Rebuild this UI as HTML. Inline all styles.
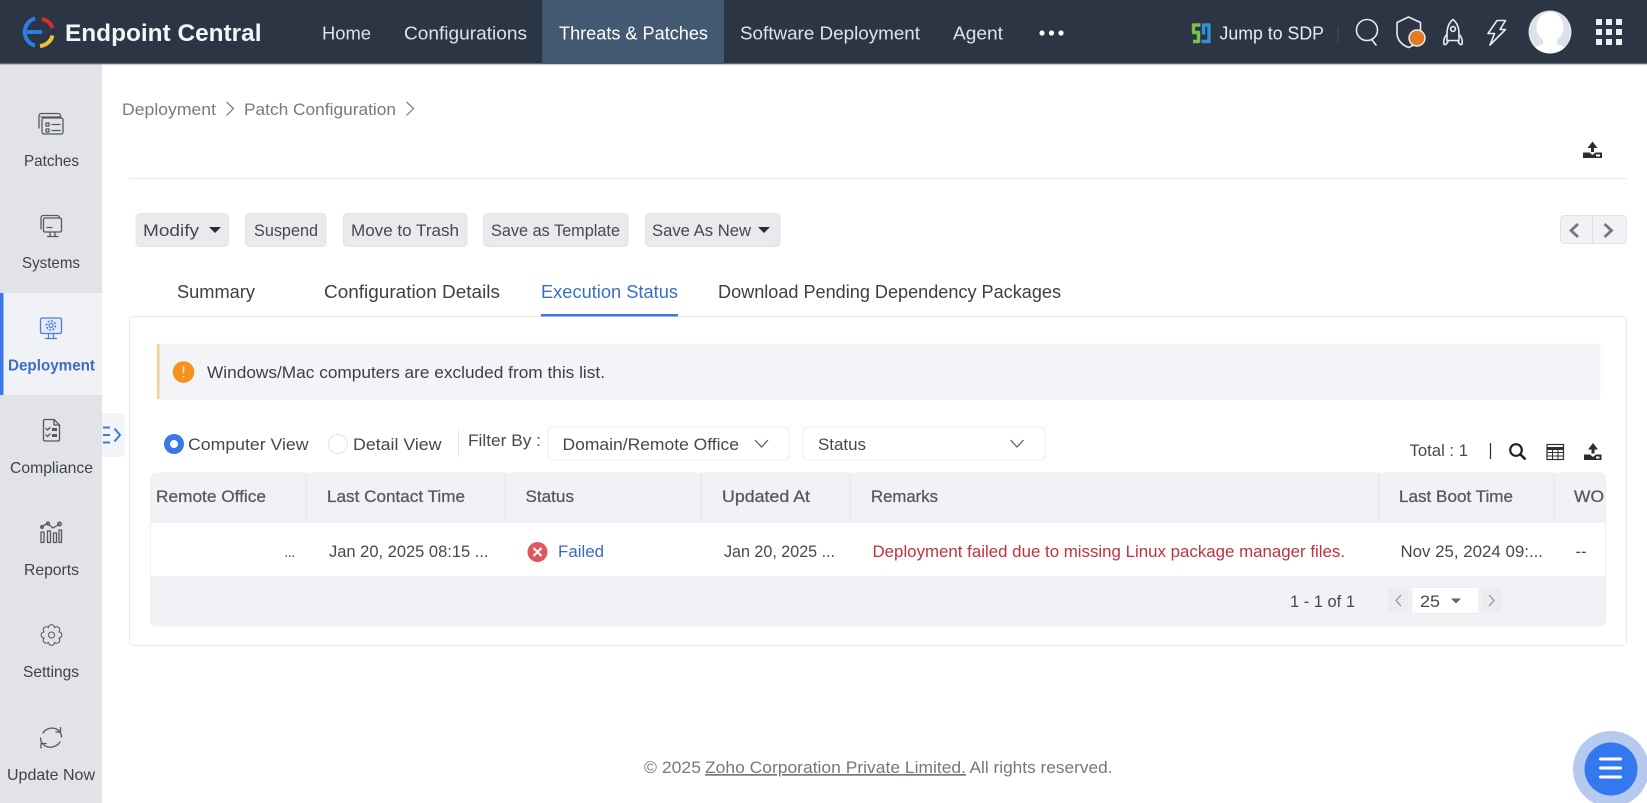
<!DOCTYPE html>
<html lang="en">
<head>
<meta charset="utf-8">
<title>Endpoint Central</title>
<style>
html,body{margin:0;padding:0;width:1647px;height:803px;overflow:hidden;background:#fff}
svg{display:block;filter:blur(.3px)}
text{font-family:"Liberation Sans",sans-serif;font-size:17px;fill:#45484d}
.n{font-size:18px;fill:#dfe3e8}
.s{font-size:16px;fill:#3f4246}
.b{font-size:16.500px;fill:#45484d}
.h{font-size:17px;fill:#54575c;stroke:#54575c;stroke-width:.25}
.i{fill:none;stroke:#55585d;stroke-width:1.3;stroke-linecap:round;stroke-linejoin:round}
.w{fill:none;stroke:#e8ebef;stroke-width:1.6;stroke-linecap:round;stroke-linejoin:round}
</style>
</head>
<body>
<svg width="1647" height="803" viewBox="0 0 1647 803" xmlns="http://www.w3.org/2000/svg">
<defs><clipPath id="av"><circle cx="1550" cy="32" r="21.500"/></clipPath></defs>
<rect width="1647" height="803" fill="#fff"/>

<!-- Header -->
<rect width="1647" height="64" fill="#2c3544"/>
<rect y="63.500" width="1647" height="1" fill="#8d96a3"/>
<rect x="542" width="182" height="64" fill="#435971"/>
<path d="M35 18.500A14 14 0 0 0 35 45.500" fill="none" stroke="#2f7de1" stroke-width="4"/>
<path d="M27 32H42" fill="none" stroke="#2f7de1" stroke-width="4"/>
<path d="M42 19A14 14 0 0 1 52.500 28" fill="none" stroke="#d92d2d" stroke-width="4"/>
<path d="M52.500 35.500A14 14 0 0 1 40 46" fill="none" stroke="#f4c430" stroke-width="4"/>
<text x="65" y="41" textLength="196.500" lengthAdjust="spacingAndGlyphs" style="font-size:24px;font-weight:700;fill:#f4f5f7">Endpoint Central</text>
<text class="n" x="322" y="39.500" textLength="49" lengthAdjust="spacingAndGlyphs">Home</text>
<text class="n" x="404" y="39.500" textLength="123" lengthAdjust="spacingAndGlyphs">Configurations</text>
<text class="n" x="559" y="39.500" textLength="149" lengthAdjust="spacingAndGlyphs" style="fill:#fff">Threats &amp; Patches</text>
<text class="n" x="740" y="39.500" textLength="180" lengthAdjust="spacingAndGlyphs">Software Deployment</text>
<text class="n" x="953" y="39.500" textLength="50" lengthAdjust="spacingAndGlyphs">Agent</text>
<circle cx="1042" cy="33" r="2.600" fill="#fff"/><circle cx="1051.500" cy="33" r="2.600" fill="#fff"/><circle cx="1061" cy="33" r="2.600" fill="#fff"/>

<!-- Jump to SDP -->
<path d="M1200.500 25H1193.500V32.500H1198.500V41.500H1193" fill="none" stroke="#7cc04b" stroke-width="3.400" stroke-linejoin="round"/>
<path d="M1201.500 41.500H1209V25H1203.500V34.500" fill="none" stroke="#2f93d6" stroke-width="3.400" stroke-linejoin="round"/>
<text x="1219.500" y="39.500" textLength="104.500" lengthAdjust="spacingAndGlyphs" style="font-size:18px;fill:#e8ebef">Jump to SDP</text>
<path d="M1338 27V43" stroke="#454e5c" stroke-width="1"/>
<circle cx="1367" cy="30" r="10.500" class="w"/>
<path d="M1372 40L1376 45" class="w"/>
<path d="M1408.500 17L1397 22.500V33C1397 40 1402 45 1408.500 47.500C1415 45 1420.500 40 1420.500 33V22.500Z" class="w"/>
<circle cx="1417" cy="38" r="8" fill="#e07b23" stroke="#eef0f3" stroke-width="1.400"/>
<path d="M1453 19.500C1448.500 23 1447 29 1447 34V40.500H1459V34C1459 29 1457.500 23 1453 19.500Z" class="w"/>
<circle cx="1453" cy="29" r="2.400" class="w"/>
<path d="M1447 34.500C1444.500 36.500 1443.500 39 1443.800 43.500C1444 45 1446 45 1447 43L1448 41.500M1459 34.500C1461.500 36.500 1462.500 39 1462.200 43.500C1462 45 1460 45 1459 43L1458 41.500" class="w"/>
<path d="M1497 20.500H1505.500L1500 29.500H1505.500L1490 45L1494.500 33.500H1488Z" class="w"/>
<circle cx="1550" cy="32" r="21.500" fill="#dce1ea"/>
<g clip-path="url(#av)" fill="#fff">
<ellipse cx="1550" cy="27" rx="13.500" ry="15"/>
<rect x="1543" y="36" width="14" height="14"/>
<ellipse cx="1550" cy="53" rx="18" ry="9.500"/>
</g>
<g fill="#eceef1">
<rect x="1596" y="19" width="6" height="6"/><rect x="1606" y="19" width="6" height="6"/><rect x="1616" y="19" width="6" height="6"/>
<rect x="1596" y="29" width="6" height="6"/><rect x="1606" y="29" width="6" height="6"/><rect x="1616" y="29" width="6" height="6"/>
<rect x="1596" y="39" width="6" height="6"/><rect x="1606" y="39" width="6" height="6"/><rect x="1616" y="39" width="6" height="6"/>
</g>

<!-- Sidebar -->
<rect y="64.500" width="102" height="739" fill="#e1e3e9"/>
<rect y="293" width="102" height="102" fill="#f1f2f6"/>
<rect y="293" width="3.500" height="102" fill="#3b78e7"/>

<!-- Patches icon -->
<path d="M39 128V116C39 114.500 40 113.500 41.500 113.500H58C59.500 113.500 60.500 114.500 60.500 116" class="i" stroke-width="1.100"/>
<path d="M41 117H61" class="i" stroke-width="1.100"/>
<rect x="42" y="118" width="21" height="16" rx="2" class="i" stroke-width="1.100"/>
<path d="M46 123H49V126H46ZM46 129H49V132H46ZM52 124.500H60M52 130.500H60" class="i" stroke-width=".9"/>
<text class="s" x="24" y="166" textLength="55" lengthAdjust="spacingAndGlyphs">Patches</text>

<!-- Systems icon -->
<path d="M41 229V218C41 216.500 42 215.500 43.500 215.500H57C58.500 215.500 59.500 216.500 59.500 218" class="i" stroke-width="1.100"/>
<rect x="43.500" y="218" width="18" height="14" rx="1.500" class="i" stroke-width="1.100"/>
<path d="M47 227.500H52M50 232V236M55 232V236M47.500 236.500H58" class="i" stroke-width="1.100"/>
<text class="s" x="22" y="268" textLength="58" lengthAdjust="spacingAndGlyphs">Systems</text>

<!-- Deployment icon -->
<rect x="40.500" y="318" width="21" height="15.500" rx="1.500" fill="#e3eaf8" stroke="#4d7fd6" stroke-width="1.300"/>
<circle cx="51" cy="325.500" r="2" fill="none" stroke="#4d7fd6" stroke-width="1.200"/>
<circle cx="51" cy="325.500" r="4.500" fill="none" stroke="#4d7fd6" stroke-width="1.600" stroke-dasharray="2 1.500"/>
<path d="M48.500 333.500V338M53.500 333.500V338M45.500 338.500H56.500" fill="none" stroke="#4d7fd6" stroke-width="1.300" stroke-linecap="round"/>
<text x="8" y="370.500" textLength="87" lengthAdjust="spacingAndGlyphs" style="font-size:16px;font-weight:700;fill:#3d6cc4">Deployment</text>

<!-- Compliance icon -->
<path d="M43.500 421C43.500 420 44 419.500 45 419.500H54L59.500 425V439.500C59.500 440.500 59 441 58 441H45C44 441 43.500 440.500 43.500 439.500Z" class="i" stroke-width="1.500"/>
<path d="M54 419.500V425H59.500" class="i"/>
<path d="M46 428.500L47.500 430L50 427.500M46 435L47.500 436.500L50 434" class="i"/>
<path d="M52 428H57V431H52ZM52 434H57V437H52Z" fill="#55585d"/>
<text class="s" x="10" y="473" textLength="83" lengthAdjust="spacingAndGlyphs">Compliance</text>

<!-- Reports icon -->
<path d="M41 532V542.500H44V532ZM47.500 531V542.500H50.500V531ZM53.500 533V542.500H56.500V533ZM59 530V542.500H61.500V530Z" class="i" stroke-width="1"/>
<path d="M41 527L47.500 523.500L53 528L59.500 524" class="i" stroke-width=".9"/>
<circle cx="48" cy="523.500" r="1.500" class="i" stroke-width=".9"/><circle cx="59.500" cy="524" r="1.800" class="i" stroke-width=".9"/><circle cx="42" cy="527" r="1.300" class="i" stroke-width=".9"/>
<text class="s" x="24" y="575" textLength="55" lengthAdjust="spacingAndGlyphs">Reports</text>

<!-- Settings icon -->
<g transform="translate(51.500 635) scale(.8)">
<path d="M3.800-9.200A3.800 3.800 0 0 1 9.200-3.800A3.800 3.800 0 0 1 9.200 3.800A3.800 3.800 0 0 1 3.800 9.200A3.800 3.800 0 0 1-3.800 9.200A3.800 3.800 0 0 1-9.200 3.800A3.800 3.800 0 0 1-9.200-3.800A3.800 3.800 0 0 1-3.800-9.200A3.800 3.800 0 0 1 3.800-9.200Z" class="i" stroke-width="1.500"/>
<circle r="3.800" class="i" stroke-width="1.500"/>
</g>
<text class="s" x="23" y="677" textLength="56" lengthAdjust="spacingAndGlyphs">Settings</text>

<!-- Update icon -->
<path d="M43 733C46 728 54 726 59 731C61 733 61.500 735 61.500 737" class="i"/>
<path d="M60 742C56 748 47 749 43 744C41 742 40.500 740 40.500 738" class="i"/>
<path d="M56 732H60.500V727.500M46 743.500H41V748" class="i"/>
<text class="s" x="7" y="780" textLength="88" lengthAdjust="spacingAndGlyphs">Update Now</text>

<!-- Sidebar toggle -->
<path d="M102 413H120A5 5 0 0 1 125 418V452A5 5 0 0 1 120 457H102Z" fill="#f3f4f7"/>
<path d="M103 427.500H110M103 435H110M103 442.500H110M114.500 428.500L120 435L114.500 441.500" fill="none" stroke="#3b78e7" stroke-width="2"/>

<!-- Breadcrumb -->
<text x="122" y="115" textLength="94" lengthAdjust="spacingAndGlyphs" style="fill:#777a7f">Deployment</text>
<path d="M226.500 102L233.500 108.500L226.500 115.500" fill="none" stroke="#777a7f" stroke-width="1.200"/>
<text x="244" y="115" textLength="152" lengthAdjust="spacingAndGlyphs" style="fill:#777a7f">Patch Configuration</text>
<path d="M406.500 102L413.500 108.500L406.500 115.500" fill="none" stroke="#777a7f" stroke-width="1.200"/>

<!-- Top export -->
<path d="M1592.500 141.500L1587.500 148H1591V152H1594V148H1597.500Z" fill="#2b2d31"/>
<path d="M1583 158V152.500H1589.500L1592.500 155L1595.500 152.500H1602V158Z" fill="#2b2d31"/>
<rect x="1596" y="154.500" width="4" height="2" fill="#fff"/>
<rect x="129" y="178" width="1498" height="1" fill="#e8eaed"/>

<!-- Buttons -->
<g fill="#e9eaed" stroke="#e3e4e8">
<rect x="136" y="213.500" width="92.500" height="33" rx="4"/>
<rect x="245.500" y="213.500" width="80.500" height="33" rx="4"/>
<rect x="343.500" y="213.500" width="123.500" height="33" rx="4"/>
<rect x="483.500" y="213.500" width="144.500" height="33" rx="4"/>
<rect x="645.500" y="213.500" width="134.500" height="33" rx="4"/>
</g>
<text class="b" x="143" y="236" textLength="56" lengthAdjust="spacingAndGlyphs">Modify</text>
<path d="M209 227H221L215 233Z" fill="#2b2d31"/>
<text class="b" x="254" y="236" textLength="64" lengthAdjust="spacingAndGlyphs">Suspend</text>
<text class="b" x="351" y="236" textLength="108" lengthAdjust="spacingAndGlyphs">Move to Trash</text>
<text class="b" x="491" y="236" textLength="129" lengthAdjust="spacingAndGlyphs">Save as Template</text>
<text class="b" x="652" y="236" textLength="99" lengthAdjust="spacingAndGlyphs">Save As New</text>
<path d="M758 227H770L764 233Z" fill="#2b2d31"/>

<!-- Pager -->
<rect x="1560.500" y="215.500" width="66" height="28" rx="4" fill="#f1f2f5" stroke="#e1e3e8"/>
<path d="M1592.500 216V243" stroke="#dfe1e6"/>
<path d="M1578 224L1571 230.500L1578 237M1604.500 224L1611.500 230.500L1604.500 237" fill="none" stroke="#74777c" stroke-width="2.800"/>

<!-- Tabs -->
<text x="177" y="298" textLength="78" lengthAdjust="spacingAndGlyphs" style="font-size:18px;fill:#3c3f44">Summary</text>
<text x="324" y="298" textLength="176" lengthAdjust="spacingAndGlyphs" style="font-size:18px;fill:#3c3f44">Configuration Details</text>
<text x="541" y="298" textLength="137" lengthAdjust="spacingAndGlyphs" style="font-size:18px;fill:#3a6fc8">Execution Status</text>
<text x="718" y="298" textLength="343" lengthAdjust="spacingAndGlyphs" style="font-size:18px;fill:#3c3f44">Download Pending Dependency Packages</text>

<!-- Panel -->
<rect x="129.500" y="316.500" width="1497" height="329" rx="4" fill="#fff" stroke="#e8eaed"/>
<rect x="541" y="314" width="137" height="2.500" fill="#3b78e7"/>

<!-- Notice -->
<rect x="157" y="344" width="1443" height="55" fill="#f3f4f7" stroke="#eceef1" stroke-width=".6"/>
<rect x="157" y="344" width="2.500" height="55" fill="#f5cf96"/>
<circle cx="183.500" cy="372" r="10.800" fill="#f4921f"/>
<path d="M183.500 366V373M183.500 376V377.500" stroke="#fde6c8" stroke-width="1.500"/>
<text x="207" y="378" textLength="398" lengthAdjust="spacingAndGlyphs" style="fill:#3c3f44">Windows/Mac computers are excluded from this list.</text>

<!-- Radios and filters -->
<circle cx="174" cy="444" r="10" fill="#3b78e7"/><circle cx="174" cy="444" r="4" fill="#fff"/>
<text x="188" y="450" textLength="120.500" lengthAdjust="spacingAndGlyphs">Computer View</text>
<circle cx="338" cy="444" r="9.500" fill="#fff" stroke="#e3e4e7"/>
<text x="353" y="450" textLength="88.500" lengthAdjust="spacingAndGlyphs">Detail View</text>
<path d="M458.500 430V457" stroke="#e3e4e7"/>
<text x="468" y="446" textLength="73" lengthAdjust="spacingAndGlyphs">Filter By :</text>
<rect x="548" y="427" width="241" height="33" rx="4" fill="#fff" stroke="#ebecef"/>
<text x="562.500" y="450" textLength="176.500" lengthAdjust="spacingAndGlyphs">Domain/Remote Office</text>
<path d="M755 440L761.500 447L768 440" fill="none" stroke="#55585d" stroke-width="1.200"/>
<rect x="803" y="427" width="242" height="33" rx="4" fill="#fff" stroke="#ebecef"/>
<text x="818" y="450" textLength="48" lengthAdjust="spacingAndGlyphs">Status</text>
<path d="M1010.500 440L1017 447L1023.500 440" fill="none" stroke="#55585d" stroke-width="1.200"/>

<!-- Total + tools -->
<text x="1409.500" y="456" textLength="58.500" lengthAdjust="spacingAndGlyphs">Total : 1</text>
<path d="M1490.500 443V459" stroke="#2b2d31" stroke-width="1.200"/>
<circle cx="1516" cy="450" r="5.800" fill="none" stroke="#1f2125" stroke-width="2.200"/>
<path d="M1520.500 454.500L1525.500 459.500" stroke="#1f2125" stroke-width="2.600"/>
<rect x="1547" y="444.500" width="16.500" height="15" fill="#fff" stroke="#2f3135" stroke-width="1.200"/>
<path d="M1547 448.500H1563.500" stroke="#2f3135" stroke-width="3"/>
<path d="M1547 452.500H1563.500M1547 456H1563.500M1552.500 448V460M1558 448V460" stroke="#2f3135" stroke-width="1"/>
<path d="M1593 443L1588 449.500H1591.500V453.500H1594.500V449.500H1598Z" fill="#2b2d31"/>
<path d="M1584 460V454.500H1590L1593 457L1596 454.500H1601.500V460Z" fill="#2b2d31"/>
<rect x="1596" y="456.500" width="3.500" height="2" fill="#fff"/>

<!-- Table -->
<rect x="150.500" y="473" width="1455" height="153" rx="6" fill="#f1f2f5" stroke="#ebedf0" stroke-width=".8"/>
<rect x="151" y="522" width="1454" height="55" fill="#fff"/>
<path d="M151 522H1605M151 577H1605" stroke="#e8eaed"/>
<path d="M306 473V522M505 473V522M701 473V522M850 473V522M1379 473V522M1554 473V522" stroke="#e5e7ea"/>
<text class="h" x="156" y="502" textLength="110" lengthAdjust="spacingAndGlyphs">Remote Office</text>
<text class="h" x="327" y="502" textLength="138" lengthAdjust="spacingAndGlyphs">Last Contact Time</text>
<text class="h" x="525.500" y="502" textLength="48.500" lengthAdjust="spacingAndGlyphs">Status</text>
<text class="h" x="722" y="502" textLength="88" lengthAdjust="spacingAndGlyphs">Updated At</text>
<text class="h" x="871" y="502" textLength="67" lengthAdjust="spacingAndGlyphs">Remarks</text>
<text class="h" x="1399" y="502" textLength="114" lengthAdjust="spacingAndGlyphs">Last Boot Time</text>
<text class="h" x="1574" y="502" textLength="30" lengthAdjust="spacingAndGlyphs">WO</text>

<text x="284.500" y="557" textLength="10.500" lengthAdjust="spacingAndGlyphs">...</text>
<text x="329" y="557" textLength="159.500" lengthAdjust="spacingAndGlyphs">Jan 20, 2025 08:15 ...</text>
<circle cx="537.500" cy="552" r="10" fill="#e0585f"/>
<path d="M533.500 548L541.500 556M541.500 548L533.500 556" stroke="#fff" stroke-width="2"/>
<text x="558" y="557" textLength="46" lengthAdjust="spacingAndGlyphs" style="fill:#3a6ab8">Failed</text>
<text x="724" y="557" textLength="111" lengthAdjust="spacingAndGlyphs">Jan 20, 2025 ...</text>
<text x="872.500" y="557" textLength="472.500" lengthAdjust="spacingAndGlyphs" style="fill:#c0323c">Deployment failed due to missing Linux package manager files.</text>
<text x="1400.500" y="557" textLength="142.500" lengthAdjust="spacingAndGlyphs">Nov 25, 2024 09:...</text>
<text x="1575.500" y="557" textLength="11" lengthAdjust="spacingAndGlyphs">--</text>

<!-- Table footer -->
<text x="1290" y="607" textLength="65" lengthAdjust="spacingAndGlyphs">1 - 1 of 1</text>
<rect x="1387.500" y="588.500" width="20.500" height="24" rx="2" fill="#ebecef"/>
<path d="M1401 595L1396 600.500L1401 606" fill="none" stroke="#8a8d92" stroke-width="1.100"/>
<rect x="1411.500" y="587.500" width="67.500" height="26" rx="2" fill="#fff" stroke="#ebecef"/>
<text x="1420" y="607" textLength="20" lengthAdjust="spacingAndGlyphs">25</text>
<path d="M1451 598.500H1461L1456 603.500Z" fill="#63666b"/>
<rect x="1481" y="588.500" width="20.500" height="24" rx="2" fill="#ebecef"/>
<path d="M1489 595L1494 600.500L1489 606" fill="none" stroke="#8a8d92" stroke-width="1.100"/>

<!-- Copyright -->
<text x="644" y="773" textLength="57" lengthAdjust="spacingAndGlyphs" style="fill:#75787d">© 2025</text>
<text x="705" y="773" textLength="261" lengthAdjust="spacingAndGlyphs" style="fill:#75787d" text-decoration="underline">Zoho Corporation Private Limited.</text>
<text x="969.500" y="773" textLength="143" lengthAdjust="spacingAndGlyphs" style="fill:#75787d">All rights reserved.</text>

<!-- FAB -->
<circle cx="1611" cy="769" r="38" fill="#b6c9ee"/>
<circle cx="1611" cy="769" r="26.500" fill="#3478f0"/>
<rect x="1599" y="757.500" width="23" height="3" rx="1.500" fill="#fff"/>
<rect x="1599" y="766.500" width="23" height="3" rx="1.500" fill="#fff"/>
<rect x="1599" y="775.500" width="23" height="3" rx="1.500" fill="#fff"/>
</svg>
</body>
</html>
